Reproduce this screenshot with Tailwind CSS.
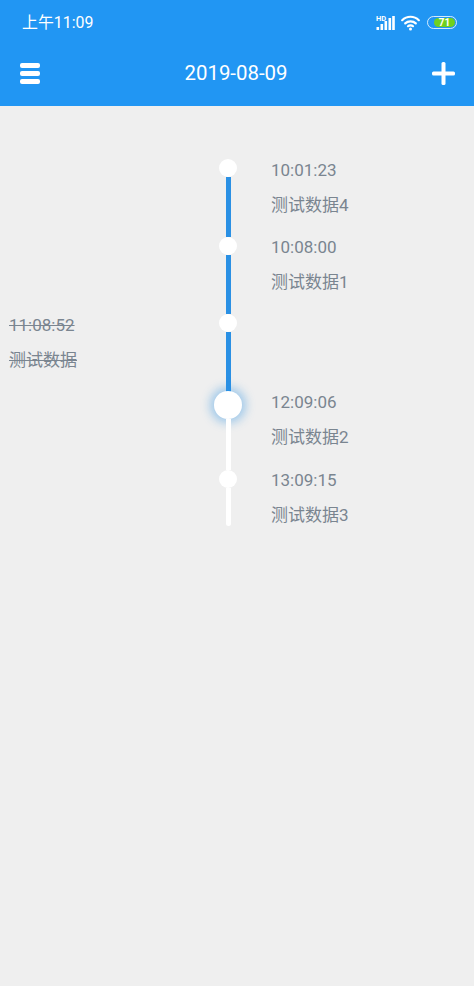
<!DOCTYPE html>
<html>
  <head>
    <meta charset="UTF-8" />
    <meta name="viewport" content="width=device-width, initial-scale=1.0" />
    <script src="https://cdn.jsdelivr.net/npm/@tailwindcss/browser@4"></script>
  </head>
  <body class="bg-[#efefef] font-['Roboto','Noto_Sans_CJK_SC',sans-serif]">
    <div class="h-[986px] w-[474px] overflow-hidden">
      <!-- Header -->
      <div class="h-[106px] bg-[#2196f3] text-white">
        <!-- Status bar -->
        <div class="flex h-[45px] items-center justify-between pl-[22px] pr-[17px]">
          <span class="text-[15.9px]">上午11:09</span>
          <div class="flex items-center gap-[6px]">
            <svg width="19" height="16" viewBox="0 0 19 16" fill="#fff">
              <text x="0" y="6" font-size="7.5" font-weight="700" font-family="Roboto">HD</text>
              <rect x="0.5" y="12" width="2.6" height="3" />
              <rect x="4.5" y="9" width="2.6" height="6" />
              <rect x="8.5" y="6" width="2.6" height="9" />
              <rect x="12.5" y="3" width="2.6" height="12" />
              <rect x="16.2" y="1" width="2.6" height="14" />
            </svg>
            <svg width="20" height="16" viewBox="0 0 20 16" fill="none" stroke="#fff" stroke-width="2.2" stroke-linecap="round">
              <path d="M1.2 5.2 C5.8 0.6 13.2 0.6 17.8 5.2" />
              <path d="M4.2 8.4 C7 5.6 12 5.6 14.8 8.4" />
              <path d="M7 11.2 C8.2 10 10.8 10 12 11.2" />
              <circle cx="9.5" cy="14" r="1.5" fill="#fff" stroke="none" />
            </svg>
            <div class="flex h-[13px] w-[30px] items-center justify-end rounded-full border border-white/80 p-[1px]">
              <div class="flex h-full w-[21px] items-center justify-center rounded-full bg-[#6fd01f] text-[10px] font-bold leading-none text-white">71</div>
            </div>
          </div>
        </div>
        <!-- Title bar -->
        <div class="flex h-[56px] items-center justify-between pl-[20px] pr-[19px]">
          <div class="flex w-[20px] flex-col gap-[3px]">
            <div class="h-[5px] rounded-[2px] bg-white"></div>
            <div class="h-[5px] rounded-[2px] bg-white"></div>
            <div class="h-[5px] rounded-[2px] bg-white"></div>
          </div>
          <span class="text-[20.4px]">2019-08-09</span>
          <svg width="23" height="23" viewBox="0 0 23 23" fill="#fff">
            <rect x="9.5" y="0" width="4" height="23" rx="1.5" />
            <rect x="0" y="9.5" width="23" height="4" rx="1.5" />
          </svg>
        </div>
      </div>

      <!-- Timeline -->
      <div class="pt-[53px] text-[17px] leading-[35px] text-[#7a8590]">
        <div class="flex h-[77.6px]">
          <div class="w-[219px]"></div>
          <div class="flex w-[18px] flex-col items-center">
            <div class="h-[18px] w-[18px] shrink-0 rounded-full bg-white"></div>
            <div class="w-[5px] flex-1 bg-[#2a90e4]"></div>
          </div>
          <div class="pl-[34px]">
            <p class="-mt-[6.4px]">10:01:23</p>
            <p>测试数据4</p>
          </div>
        </div>
        <div class="flex h-[77.6px]">
          <div class="w-[219px]"></div>
          <div class="flex w-[18px] flex-col items-center">
            <div class="h-[18px] w-[18px] shrink-0 rounded-full bg-white"></div>
            <div class="w-[5px] flex-1 bg-[#2a90e4]"></div>
          </div>
          <div class="pl-[34px]">
            <p class="-mt-[6.4px]">10:08:00</p>
            <p>测试数据1</p>
          </div>
        </div>
        <div class="flex h-[77.6px]">
          <div class="w-[219px] pl-[9px] line-through">
            <p class="-mt-[6.4px]">11:08:52</p>
            <p>测试数据</p>
          </div>
          <div class="flex w-[18px] flex-col items-center">
            <div class="h-[18px] w-[18px] shrink-0 rounded-full bg-white"></div>
            <div class="w-[5px] flex-1 bg-[#2a90e4]"></div>
          </div>
        </div>
        <div class="flex h-[78px]">
          <div class="w-[219px]"></div>
          <div class="flex w-[18px] flex-col items-center">
            <div class="-mt-px h-[28px] w-[28px] shrink-0 rounded-full bg-white shadow-[0_0_10px_4px_rgba(42,144,228,0.4)]"></div>
            <div class="w-[5px] flex-1 bg-white"></div>
          </div>
          <div class="pl-[34px]">
            <p class="-mt-[6.4px]">12:09:06</p>
            <p>测试数据2</p>
          </div>
        </div>
        <div class="flex h-[56.5px]">
          <div class="w-[219px]"></div>
          <div class="flex w-[18px] flex-col items-center">
            <div class="h-[18px] w-[18px] shrink-0 rounded-full bg-white"></div>
            <div class="w-[5px] flex-1 rounded-b-full bg-white"></div>
          </div>
          <div class="pl-[34px]">
            <p class="-mt-[6.4px]">13:09:15</p>
            <p>测试数据3</p>
          </div>
        </div>
      </div>
    </div>
  </body>
</html>
